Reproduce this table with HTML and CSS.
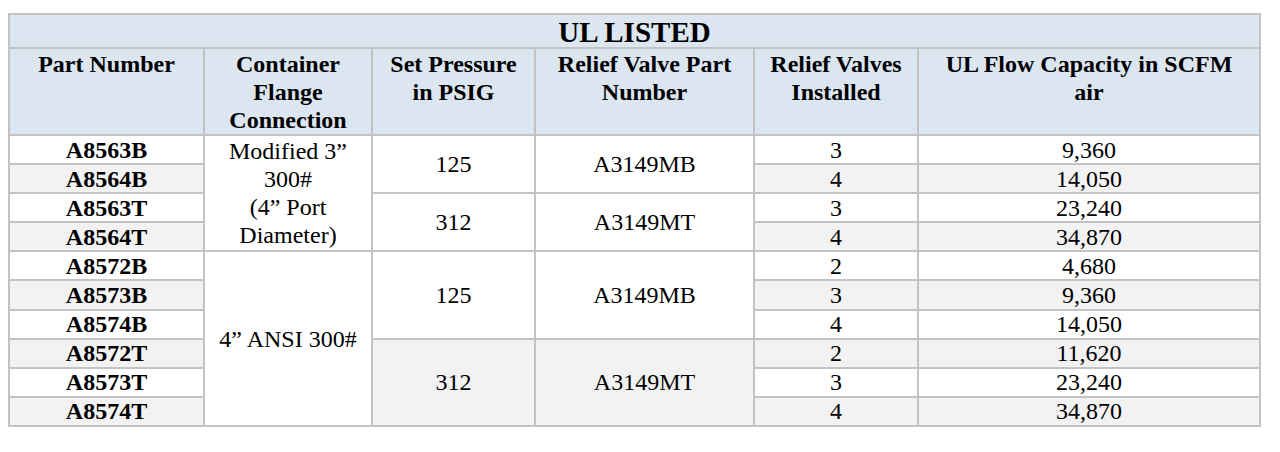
FILE: index.html
```html
<!DOCTYPE html>
<html>
<head>
<meta charset="utf-8">
<link rel="stylesheet" href="styles.css">
</head>
<body>
<table class="ul-table">
  <colgroup>
    <col class="c1"><col class="c2"><col class="c3"><col class="c4"><col class="c5"><col class="c6">
  </colgroup>
  <thead>
    <tr class="title-row"><th colspan="6" class="title">UL LISTED</th></tr>
    <tr class="head-row">
      <th>Part Number</th>
      <th>Container<br>Flange<br>Connection</th>
      <th>Set Pressure<br>in PSIG</th>
      <th>Relief Valve Part<br>Number</th>
      <th>Relief Valves<br>Installed</th>
      <th>UL Flow Capacity in SCFM<br>air</th>
    </tr>
  </thead>
  <tbody>
    <tr>
      <td class="pn">A8563B</td>
      <td rowspan="4" class="merge">Modified 3”<br>300#<br>(4” Port<br>Diameter)</td>
      <td rowspan="2" class="merge">125</td>
      <td rowspan="2" class="merge">A3149MB</td>
      <td>3</td><td>9,360</td>
    </tr>
    <tr class="alt"><td class="pn">A8564B</td><td>4</td><td>14,050</td></tr>
    <tr>
      <td class="pn">A8563T</td>
      <td rowspan="2" class="merge">312</td>
      <td rowspan="2" class="merge">A3149MT</td>
      <td>3</td><td>23,240</td>
    </tr>
    <tr class="alt"><td class="pn">A8564T</td><td>4</td><td>34,870</td></tr>
    <tr>
      <td class="pn">A8572B</td>
      <td rowspan="6" class="merge">4” ANSI 300#</td>
      <td rowspan="3" class="merge">125</td>
      <td rowspan="3" class="merge">A3149MB</td>
      <td>2</td><td>4,680</td>
    </tr>
    <tr class="alt"><td class="pn">A8573B</td><td>3</td><td>9,360</td></tr>
    <tr><td class="pn">A8574B</td><td>4</td><td>14,050</td></tr>
    <tr class="alt">
      <td class="pn">A8572T</td>
      <td rowspan="3" class="merge grey">312</td>
      <td rowspan="3" class="merge grey">A3149MT</td>
      <td>2</td><td>11,620</td>
    </tr>
    <tr><td class="pn">A8573T</td><td>3</td><td>23,240</td></tr>
    <tr class="alt"><td class="pn">A8574T</td><td>4</td><td>34,870</td></tr>
  </tbody>
</table>
</body>
</html>
```

FILE: styles.css
```css
html, body {
  background: #ffffff;
}
body {
  margin: 13px 8px;
  font-family: "Liberation Serif", "Times New Roman", serif;
  color: #000000;
}
.ul-table {
  border-collapse: collapse;
  table-layout: fixed;
  width: 1253px;
  font-size: 24px;
}
.c1 { width: 195px; }
.c2 { width: 168px; }
.c3 { width: 163px; }
.c4 { width: 219px; }
.c5 { width: 164px; }
.c6 { width: 342px; }

.ul-table th,
.ul-table td {
  border: 2px solid #c3c3c3;
  padding: 0;
  text-align: center;
}
.ul-table th {
  background: #dce6f1;
  font-weight: bold;
  vertical-align: top;
  line-height: 28px;
  padding-top: 1px;
}
.title-row { height: 34px; }
.ul-table th.title {
  font-size: 29px;
  line-height: 30px;
  vertical-align: middle;
  padding-top: 1px;
}
.head-row { height: 86px; }
.ul-table tbody tr { height: 29.1px; }
.ul-table td {
  background: #ffffff;
  line-height: 26px;
  vertical-align: middle;
}
.ul-table tr.alt td { background: #f2f2f2; }
.ul-table td.merge { background: #ffffff; line-height: 28px; }
.ul-table tr.alt td.merge.grey,
.ul-table td.merge.grey { background: #f2f2f2; }
.ul-table td.pn { font-weight: bold; }
```
